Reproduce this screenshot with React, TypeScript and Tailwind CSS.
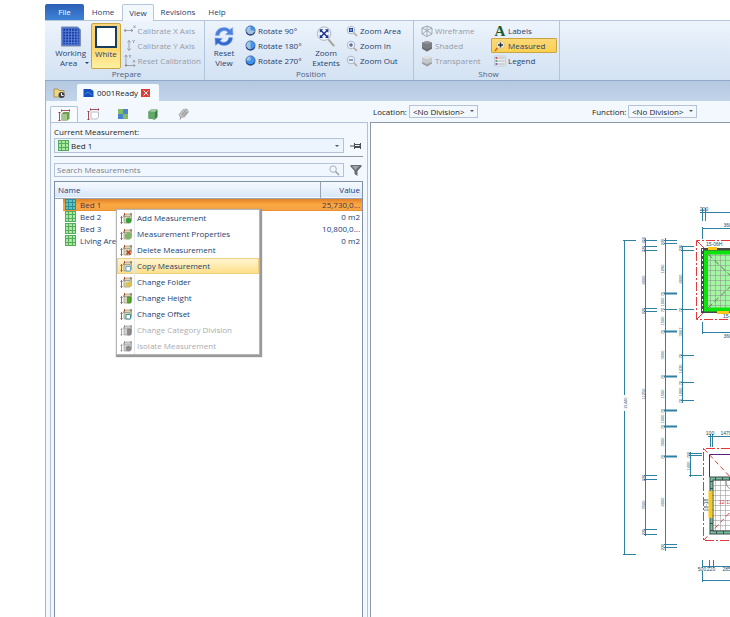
import React from "react";

const calibrations = [
  { label: "Calibrate X Axis", kind: "x" },
  { label: "Calibrate Y Axis", kind: "y" },
  { label: "Reset Calibration", kind: "xy" },
];

const measurements = [
  { name: "Bed 1", value: "25,730,0...", selected: true },
  { name: "Bed 2", value: "0 m2" },
  { name: "Bed 3", value: "10,800,0..." },
  { name: "Living Area", value: "0 m2" },
];

const menuItems = [
  { label: "Add Measurement", badge: "#35a03a", shape: "round" },
  { label: "Measurement Properties", badge: "#7fb56a", shape: "cube" },
  { label: "Delete Measurement", badge: "#c8391c", shape: "cross" },
  { label: "Copy Measurement", badge: "#6aa7c9", shape: "page", active: true },
  { label: "Change Folder", badge: "#e0c04e", shape: "folder" },
  { label: "Change Height", badge: "#58a82e", shape: "height" },
  { label: "Change Offset", badge: "#3f8f96", shape: "page" },
  { label: "Change Category Division", badge: "#8c8c8c", shape: "height", disabled: true },
  { label: "Isolate Measurement", badge: "#8c8c8c", shape: "round", disabled: true },
];

const AxisIcon = ({ kind }: { kind: string }) => (
  <svg viewBox="0 0 12 13" className="h-[13px] w-3 shrink-0" fill="none" stroke="#8b8f96">
    {kind === "x" && <path d="M0 6.500h9M2 5L0 6.500 2 8M7 5l2 1.500L7 8M9.500 1.500l2 2.500M11.500 1.500l-2 2.500" strokeWidth=".8" />}
    {kind === "y" && <path d="M5 1.500v10M3.500 3.500L5 1.500l1.500 2M3.500 9.500L5 11.500l1.500-2M8.500 1l1 1.500L11 1M9.500 2.500V4" strokeWidth=".8" />}
    {kind === "xy" && (
      <>
        <path d="M2 1v10.500h9M.5 3L2 1l1.500 2M9.500 10l1.500 1.500-1.500 1.500M5 1l1 1.500L7 1M6 2.500V4M9 6l2 2.500M11 6L9 8.500" strokeWidth=".8" />
        <path d="M1 11.500h2M2 10.500v2" stroke="#a06a6a" />
      </>
    )}
  </svg>
);

const GridIcon = ({ selected }: { selected?: boolean }) => (
  <svg viewBox="0 0 11 11" className="h-[11px] w-[11px] shrink-0">
    <rect width="11" height="11" fill={selected ? "#2f8f98" : "#57a95c"} />
    {[1, 4, 8].map((x) =>
      [1, 4, 8].map((y) => (
        <rect
          key={`${x}-${y}`}
          x={x}
          y={y}
          width={x === 4 ? 3 : 2}
          height={y === 4 ? 3 : 2}
          fill={selected ? "#5cc4c0" : "#a5eba0"}
        />
      ))
    )}
  </svg>
);

const RotateIcon = ({ turn }: { turn: number }) => (
  <svg viewBox="0 0 12 12" className="h-[11px] w-[11px] shrink-0">
    <circle cx="6" cy="6" r="5" fill="#a9c3dc" />
    {turn === 90 && <path d="M6 6V1a5 5 0 0 1 5 5z" fill="#3f95ee" />}
    {turn === 180 && <path d="M6 11V1a5 5 0 0 1 0 10z" fill="#3f95ee" />}
    {turn === 270 && <path d="M1 6h5V1a5 5 0 1 1-5 5z" fill="#3f95ee" />}
    <circle cx="6" cy="6" r="5" fill="none" stroke="#3c68ae" />
    <path d="M1.500 8a5 5 0 0 0 9 0" fill="none" stroke="#2b4788" strokeWidth="1.200" />
  </svg>
);

const ZoomIcon = ({ kind }: { kind: string }) => (
  <svg viewBox="0 0 12 12" className="h-3 w-3 shrink-0" fill="none">
    <path d="M7.500 7.500l3.500 3.500" stroke="#b2a596" strokeWidth="1.500" />
    <circle cx="5" cy="5" r="3.800" fill="#e8f1fa" stroke="#a5b2c4" strokeWidth=".9" />
    {kind === "area" && <rect x="3.500" y="3.500" width="3" height="3" fill="#7ea0dc" stroke="#2843a0" />}
    {kind === "in" && <path d="M3 5h4M5 3v4" stroke="#334a7c" />}
    {kind === "out" && <path d="M3 5h4" stroke="#334a7c" />}
  </svg>
);

const ModeIcon = ({ kind }: { kind: string }) => {
  if (kind === "wire")
    return (
      <svg viewBox="0 0 12 12" className="h-3 w-3 shrink-0" fill="none" stroke="#9aa0a8" strokeWidth=".9">
        <path d="M1 3l5-2 5 2v6l-5 2.500L1 9zM1 3l5 2.500L11 3M6 1v10.500M1 9l5-3.500L11 9" />
      </svg>
    );
  const dark = kind === "shaded";
  return (
    <svg viewBox="0 0 12 12" className="h-3 w-3 shrink-0">
      <path d="M1 2.500L6 1l5 1.500v6L6 11.500l-5-3z" fill={dark ? "#7b7f84" : "#c6c9cc"} />
      <path d="M1 2.500L6 4l5-1.500L6 1z" fill={dark ? "#94989c" : "#e1e3e5"} />
      <path d="M1 7l5 2 5-2v1.500l-5 3-5-3z" fill={dark ? "#6a6d72" : "#9c9fa3"} />
    </svg>
  );
};

const MenuIcon = ({ badge, shape, disabled }: { badge: string; shape: string; disabled?: boolean }) => (
  <svg viewBox="0 0 12 12" className="h-3 w-3 shrink-0" fill="none">
    <path d="M4 4L6 2h5.500v7l-1.500 2H4z" fill={disabled ? "#cfcfcf" : "#d3d9bd"} stroke={disabled ? "#a2a2a2" : "#a19a80"} strokeWidth=".8" />
    <path d="M4 4.500h6V11M10 4.500l1.500-2" stroke={disabled ? "#b0b0b0" : "#9a8f7a"} strokeWidth=".7" />
    <path d="M1.500 4.500v7M.5 5.500l1-1 1 1M.5 10.500l1 1 1-1" stroke={disabled ? "#9a9a9a" : "#6f5c58"} strokeWidth=".9" />
    <path d="M4.500 1v2M11 1v2M3 4h1.500" stroke={disabled ? "#8e8e8e" : "#b5402c"} />
    {shape === "round" && <circle cx="8.500" cy="8.500" r="2.700" fill={badge} />}
    {shape === "cube" && <path d="M5 6l4-1.500 2.500 1V10L8 11.500 5 10z" fill={badge} />}
    {shape === "cross" && <path d="M6.500 6.500l4 4M10.500 6.500l-4 4" stroke={badge} strokeWidth="1.700" />}
    {shape === "page" && <path d="M6 6.500h4.500v4.500H6z" fill="#fff" stroke={badge} />}
    {shape === "folder" && <path d="M5.500 7h2l1-1h3v4.500h-6z" fill={badge} />}
    {shape === "height" && <path d="M7.500 5h3.500v6H7.500z" fill={badge} stroke={disabled ? "#777" : "#387820"} strokeWidth=".6" />}
  </svg>
);

const SideTabIcon = ({ kind }: { kind: string }) => (
  <svg viewBox="0 0 12 12" className="h-3 w-3" fill="none">
    {(kind === "measure" || kind === "outline") && (
      <>
        <path d="M3.500 1.500h8M1.500 3.500v8" stroke="#9b3c45" strokeWidth=".9" />
        <path d="M3.500.5v2M11.500.5v2M.5 3.500h2M.5 11.500h2" stroke="#9b3c45" />
      </>
    )}
    {kind === "measure" && (
      <>
        <path d="M3.500 5l2-2h6v6.500L9.500 11.500h-6z" fill="#6f9a58" />
        <path d="M3.500 5H9v6.500H3.500z" fill="#9fc889" />
      </>
    )}
    {kind === "outline" && <path d="M4 4h7.500v5L10 11H4z" fill="#fff" stroke="#b9bcc8" />}
    {kind === "tiles" && (
      <>
        <rect x="1" y="1" width="5" height="5" fill="#86bb66" />
        <rect x="6" y="1" width="5" height="5" fill="#4a83d0" />
        <rect x="1" y="6" width="5" height="5" fill="#4a83d0" />
        <rect x="6" y="6" width="5" height="5" fill="#86bb66" />
      </>
    )}
    {kind === "cube" && (
      <>
        <path d="M1.500 3.500L4 1.500h6.500v7.500L8 11.500l-6.500-1z" fill="#3f7d48" />
        <path d="M1.500 3.500L8 4v7.500l-6.500-1z" fill="#64a76a" />
        <path d="M1.500 3.500L4 1.500h6.500L8 4z" fill="#9ccf9c" />
      </>
    )}
    {kind === "clip" && (
      <>
        <path d="M2 6.500L6 1.500l4-.5 1.500 3L7.500 9 3.500 9.500z" fill="#c2c2c4" stroke="#a2a2a5" strokeWidth=".7" />
        <path d="M5 7l3.500-4.500M6.500 8L10 4M4 9l-1 2.500" stroke="#84868b" strokeWidth=".9" />
      </>
    )}
  </svg>
);

const WorkingAreaIcon = () => (
  <svg viewBox="0 0 22 22" className="h-[22px] w-[22px]">
    <path d="M1 1h17l3 3v17H1z" fill="#4c74d2" stroke="#7e8fae" />
    <rect x="3" y="3" width="16" height="16" fill="#173b9e" />
    <path d="M3 5.500h16M3 8.500h16M3 11.500h16M3 14.500h16M3 17.500h16M5.500 3v16M8.500 3v16M11.500 3v16M14.500 3v16M17.500 3v16" stroke="#6a91e8" strokeWidth=".8" />
  </svg>
);

const ResetIcon = () => (
  <svg viewBox="0 0 22 22" className="h-[22px] w-[22px]">
    <path d="M2 10C2 5 6 1.500 11 1.500c2.500 0 4.500.8 6 2.300L20 1.500l.5 8-8-.5 2.500-2.500C12 3.500 6.500 5 6 10z" fill="#4c80dc" stroke="#8aaee8" strokeWidth=".6" />
    <path d="M20 12c0 5-4 8.500-9 8.500-2.500 0-4.500-.8-6-2.300L2 20.500l-.5-8 8 .5L7 15.500c3 3 8.500 1.500 9-3.500z" fill="#3468cf" stroke="#8aaee8" strokeWidth=".6" />
  </svg>
);

const ExtentsIcon = () => (
  <svg viewBox="0 0 22 22" className="h-[22px] w-[22px]" fill="none">
    <path d="M13.500 14l6 7" stroke="#a8a098" strokeWidth="2" />
    <circle cx="9" cy="8" r="7" fill="#f2f7fd" stroke="#a6afbd" />
    <path d="M6 5l6 6M12 5l-6 6" stroke="#1b2f8e" strokeWidth="1.500" />
    <path d="M4.500 3.500h3.500L4.500 7zM13.500 3.500V7L10 3.500zM4.500 12.500V9L8 12.500zM13.500 12.500H10L13.500 9z" fill="#1b2f8e" />
  </svg>
);

const RibbonButton = ({ children, disabled, active }: { children: React.ReactNode; disabled?: boolean; active?: boolean }) => (
  <button
    disabled={disabled}
    className={`flex h-[15px] items-center gap-[2px] whitespace-nowrap rounded-[1px] border px-[2px] ${
      active ? "border-[#c9a545] bg-linear-to-b from-[#fdd977] to-[#fbd04e]" : "border-transparent"
    } ${disabled ? "text-[#959ba5]" : "text-[#24416f]"}`}
  >
    {children}
  </button>
);

const DivisionSelect = ({ id, label }: { id: string; label: string }) => (
  <div className="flex items-center">
    <label htmlFor={id} className="w-9 whitespace-nowrap">
      {label}
    </label>
    <div className="relative">
      <select id={id} className="block h-[13px] w-[69px] appearance-none border border-[#b4c3d8] bg-[#f3f8fe] pl-[3px] leading-[11px]">
        <option>&lt;No Division&gt;</option>
      </select>
      <span className="pointer-events-none absolute right-1 top-[5px] border-x-2 border-t-2 border-x-transparent border-t-[#555]" />
    </div>
  </div>
);

// [x, top, bottom, tick positions]
const chains: [number, number, number, number[]][] = [
  [625, 241, 555, [241, 555]],
  [646, 238, 536, [241, 247, 251, 309, 312, 476, 480, 530, 535]],
  [666, 238, 551, [241, 244, 294, 310, 332, 377, 411, 427, 457, 545, 548]],
  [683, 246, 403, [247, 251, 310, 356, 383, 401]],
  [691, 452, 477, [454, 456, 476]],
];

const heavyTicks = [294, 332, 377, 411, 427, 457];

const chainLabels: [number, number, string][] = [
  [625, 403, "21440"],
  [643, 240, "450"],
  [643, 249, "220"],
  [643, 280, "4000"],
  [643, 311, "220"],
  [643, 394, "11250"],
  [643, 478, "220"],
  [643, 505, "3500"],
  [643, 532, "220"],
  [662, 242, "220"],
  [662, 269, "1290"],
  [662, 294, "70"],
  [662, 302, "1000"],
  [662, 310, "70"],
  [662, 321, "1500"],
  [662, 332, "70"],
  [662, 355, "3000"],
  [662, 377, "70"],
  [662, 394, "1500"],
  [662, 411, "70"],
  [662, 419, "1000"],
  [662, 427, "70"],
  [662, 442, "3000"],
  [662, 457, "70"],
  [662, 502, "4000"],
  [662, 547, "220"],
  [680, 248, "220"],
  [680, 279, "4000"],
  [680, 310, "70"],
  [680, 332, "3067"],
  [680, 356, "70"],
  [680, 369, "1430"],
  [680, 383, "70"],
  [680, 392, "1200"],
  [680, 401, "70"],
  [688, 455, "700"],
  [688, 466, "1400"],
];

const FloorPlan = () => (
  <svg className="h-full w-full" fill="none">
    <defs>
      <pattern id="tiles" width="5" height="5" patternUnits="userSpaceOnUse">
        <path d="M0 .5h5M.5 0v5" stroke="#8a8a8a" strokeWidth=".5" />
      </pattern>
    </defs>
    <g transform="translate(-371 -123)" fontFamily="Liberation Sans, sans-serif">
      <g stroke="#2f80a2">
        {chains.map(([x, top, bottom, ticks]) => (
          <g key={x}>
            <path d={`M${x - 0.5} ${top}V${bottom}`} />
            {ticks.map((y) => (
              <path
                key={y}
                d={`M${x === 625 ? x - 2 : x - 2} ${y - 0.5}H${x + 11}`}
                strokeWidth={x === 666 && heavyTicks.includes(y) ? 2 : 1}
              />
            ))}
          </g>
        ))}
        <path d="M700 212.500h120M702.500 208v13M705.500 208v13M702 228.500h120M702.500 227v12M702 332.500h120M702.500 322v12" />
        <path d="M708 436.500h120M710.500 434v13M712.500 434v13M702 566.500h120M702.500 560v8M709.500 560v8M713.500 560v8M702 580.500h120M702.500 571v11" />
      </g>
      <path d="M624.500 395v16" stroke="#fff" strokeWidth="2" />
      <g fill="#174f70" fontSize="4" textAnchor="middle">
        {chainLabels.map(([x, y, text]) => (
          <text key={`${x}-${y}`} transform={`translate(${x + 2} ${y}) rotate(-90)`}>
            {text}
          </text>
        ))}
        <g fontSize="5">
          <text x="704" y="211">220</text>
          <text x="729" y="227">3600</text>
          <text x="729" y="338">3600</text>
          <text x="710" y="435">100</text>
          <text x="726" y="435">1470</text>
          <text x="702" y="571">500</text>
          <text x="711" y="571">220</text>
          <text x="728" y="571">2850</text>
        </g>
      </g>

      <path d="M820 240.500H696.500V319.500H820" stroke="#e23a3a" strokeDasharray="9 2 2 2" />
      <path d="M697 241l10 10M697 319l8-8" stroke="#e23a3a" />
      <path d="M820 249.500H702.500V311.500H820" fill="#a4f5a4" stroke="#4a4a4a" strokeWidth="3" />
      <path d="M702.500 249v64" stroke="#fff" strokeDasharray="2 3" />
      <path d="M820 252.500H706V309.500H820" stroke="#0be40b" strokeWidth="4" />
      <path d="M708 254h100v54H708z" fill="url(#tiles)" />
      <path d="M708 254l28 27-28 27" stroke="#627d57" strokeDasharray="6 3" />
      <path d="M708 248.500h9M717 312.500h12" stroke="#ffc61a" strokeWidth="3" />
      <text x="706" y="246" fontSize="5" fill="#174f70">15-06H</text>
      <text x="723" y="318" fontSize="5" fill="#174f70">15-06</text>

      <path d="M820 448.500H703.500V540.500H820" stroke="#e23a3a" strokeDasharray="9 2 2 2" />
      <path d="M704 449l30 32M704 540l30-32" stroke="#e23a3a" strokeDasharray="5 3" />
      <path d="M820 454.500H709.500V477" stroke="#582080" />
      <path d="M712 479h100v53H712z" fill="url(#tiles)" />
      <path d="M820 478.500H711.500V532.500H820" stroke="#3c4a48" strokeWidth="4" />
      <path d="M820 478.500H711.500V532.500H820" stroke="#73bfa0" strokeDasharray="6 1" strokeWidth="2" />
      <path d="M710.500 491v27" stroke="#ffc61a" strokeWidth="4" />
      <path d="M726 480c0 6 2 8 6 10" stroke="#888" />
      <text transform="translate(708 505) rotate(-90)" textAnchor="middle" fontSize="5" fill="#174f70">18-18</text>
      <text x="719" y="504" fontSize="5" fill="#e23a3a">12-13</text>
    </g>
  </svg>
);

const Ribbon = () => (
  <section className="flex h-[61px] border-y border-t-[#b5c6da] border-b-[#8fa9c8] bg-linear-to-b from-[#edf4fc] via-[#dfeaf7] to-[#d3e2f3]">
    <div className="flex w-40 flex-col border-r border-[#b3c5da]">
      <div className="flex h-[47px] pl-2 pt-[2px]">
        <button className="relative flex w-9 flex-col items-center pt-[3px] leading-[10px]">
          <WorkingAreaIcon />
          <span className="mt-px">Working</span>
          <span className="pr-1">Area</span>
          <span className="absolute -right-[1px] bottom-1 border-x-2 border-t-2 border-x-transparent border-t-[#24416f]" />
        </button>
        <button className="ml-[3px] flex h-[46px] w-[30px] flex-col items-center rounded-[2px] border border-[#c9a545] bg-linear-to-b from-[#fbd67b] via-[#fdd467] to-[#fff0a0] pt-[2px]">
          <span className="h-[22px] w-[22px] border-2 border-[#173d60] bg-white" />
          <span className="mt-px leading-[10px]">White</span>
        </button>
        <div className="flex flex-col">
          {calibrations.map((item) => (
            <RibbonButton key={item.kind} disabled>
              <AxisIcon kind={item.kind} />
              {item.label}
            </RibbonButton>
          ))}
        </div>
      </div>
      <div className="pl-1 text-center leading-3 text-[#4b6287]">Prepare</div>
    </div>
    <div className="flex w-[209px] flex-col border-r border-[#b3c5da]">
      <div className="flex h-[47px] pl-px pt-[2px]">
        <button className="flex w-9 flex-col items-center pt-[3px] leading-[10px]">
          <ResetIcon />
          <span className="mt-px">Reset</span>
          <span>View</span>
        </button>
        <div className="flex w-[67px] flex-col">
          {[90, 180, 270].map((turn) => (
            <RibbonButton key={turn}>
              <RotateIcon turn={turn} />
              Rotate {turn}°
            </RibbonButton>
          ))}
        </div>
        <button className="flex w-[34px] flex-col items-center pt-[3px] leading-[10px]">
          <ExtentsIcon />
          <span className="mt-px">Zoom</span>
          <span>Extents</span>
        </button>
        <div className="flex flex-col">
          <RibbonButton>
            <ZoomIcon kind="area" />
            Zoom Area
          </RibbonButton>
          <RibbonButton>
            <ZoomIcon kind="in" />
            Zoom In
          </RibbonButton>
          <RibbonButton>
            <ZoomIcon kind="out" />
            Zoom Out
          </RibbonButton>
        </div>
      </div>
      <div className="pl-1 text-center leading-3 text-[#4b6287]">Position</div>
    </div>
    <div className="flex w-[146px] flex-col border-r border-[#b3c5da]">
      <div className="flex h-[47px] pl-1 pt-[2px]">
        <div className="flex w-[73px] flex-col">
          <RibbonButton disabled>
            <ModeIcon kind="wire" />
            Wireframe
          </RibbonButton>
          <RibbonButton disabled>
            <ModeIcon kind="shaded" />
            Shaded
          </RibbonButton>
          <RibbonButton disabled>
            <ModeIcon kind="transparent" />
            Transparent
          </RibbonButton>
        </div>
        <div className="flex w-[66px] flex-col">
          <RibbonButton>
            <span className="w-3 text-center font-['Liberation_Serif',serif] text-[15px] font-bold leading-3 text-[#1d5c26]">A</span>
            Labels
          </RibbonButton>
          <RibbonButton active>
            <svg viewBox="0 0 12 12" className="h-3 w-3" fill="none">
              <circle cx="6.500" cy="5" r="4" fill="#ffefb0" stroke="#c6b98c" strokeWidth=".7" />
              <path d="M6.500 2.500v5M4 5h5" stroke="#243457" strokeWidth="1.500" />
              <path d="M3.500 8L1 11" stroke="#c96a20" strokeWidth="1.500" />
            </svg>
            Measured
          </RibbonButton>
          <RibbonButton>
            <svg viewBox="0 0 12 12" className="h-3 w-3">
              <rect x=".5" y="1" width="11" height="10" fill="#e9edf0" stroke="#b7bcc6" strokeWidth=".6" />
              <path d="M4.500 3h6M4.500 6h6M4.500 9h6" stroke="#a3a8b2" strokeWidth=".8" />
              <path d="M1.500 2h2v2h-2z" fill="#c85462" />
              <path d="M1.500 5h2v2h-2z" fill="#63a56a" />
              <path d="M1.500 8h2v2h-2z" fill="#7b65b5" />
            </svg>
            Legend
          </RibbonButton>
        </div>
      </div>
      <div className="pl-1 text-center leading-3 text-[#4b6287]">Show</div>
    </div>
  </section>
);

const ContextMenu = () => (
  <div role="menu" className="absolute left-[61px] top-[27px] w-36 border border-[#b5b5b5] bg-white text-[#24416f] shadow-[1px_1px_1px_1px_#999]">
    {menuItems.map((item) => (
      <button
        key={item.label}
        role="menuitem"
        disabled={item.disabled}
        className={`flex h-4 w-full items-center border pl-[2px] text-left ${
          item.active ? "border-[#f0d080] bg-linear-to-b from-[#fff5cf] to-[#ffe08a]" : "border-transparent"
        } ${item.disabled ? "text-[#a9abae]" : ""}`}
      >
        <MenuIcon badge={item.badge} shape={item.shape} disabled={item.disabled} />
        <span className="ml-[2px] border-l border-[#e3e6ea] pl-[2px] leading-4">{item.label}</span>
      </button>
    ))}
  </div>
);

const Sidebar = () => (
  <aside className="flex w-[324px] shrink-0 flex-col pl-1 pr-[2px] pt-[5px]">
    <div className="flex">
      {["measure", "outline", "tiles", "cube", "clip"].map((kind, index) => (
        <button
          key={kind}
          aria-label={kind}
          className={`flex h-4 items-center justify-center ${
            index === 0 ? "w-7 rounded-t-[2px] border border-b-0 border-[#b0c1d8] bg-[#f8fbff]" : "w-[30px]"
          }`}
        >
          <SideTabIcon kind={kind} />
        </button>
      ))}
    </div>
    <div className="flex flex-1 flex-col border border-b-0 border-[#b0c1d8] pl-[3px] pr-1 pt-[3px]">
      <label htmlFor="current" className="leading-[11px]">
        Current Measurement:
      </label>
      <div className="mt-px flex items-center">
        <div className="flex h-[15px] flex-1 items-center border border-[#b4c3d8] bg-[#ecf5fe] pl-[3px]">
          <GridIcon />
          <select id="current" className="h-[13px] flex-1 appearance-none pl-[2px] leading-[13px]">
            <option>Bed 1</option>
          </select>
          <span className="pointer-events-none mr-1 border-x-2 border-t-2 border-x-transparent border-t-[#555]" />
        </div>
        <button aria-label="Pin" className="flex w-[19px] justify-center pl-1">
          <svg viewBox="0 0 12 8" className="h-2 w-3" fill="none" stroke="#4b4e54">
            <path d="M0 4h4M4.500 1v6M5 2.500h5v3H5M5 4.500h5M10.500 1v6" />
          </svg>
        </button>
      </div>
      <hr className="mt-[3px] border-[#8f9aa8]" />
      <div className="mt-[6px] flex items-center">
        <div className="flex h-[14px] flex-1 items-center border border-[#b4c3d8] bg-[#f0f7fe] pl-[2px] pr-[3px]">
          <input
            type="text"
            aria-label="Search Measurements"
            placeholder="Search Measurements"
            className="h-3 flex-1 leading-3 outline-none placeholder:text-[#7b818a]"
          />
          <svg viewBox="0 0 12 12" className="h-[11px] w-[11px]" fill="none" stroke="#a3aab4">
            <circle cx="4.500" cy="4.500" r="3.500" />
            <path d="M7 7l4 4" strokeWidth="1.700" />
          </svg>
        </div>
        <button aria-label="Filter" className="flex w-[19px] justify-center pl-1">
          <svg viewBox="0 0 12 11" className="h-[11px] w-3">
            <path d="M.5 0h11v1.500L7.500 6v5l-3-2V6L.5 1.500z" fill="#696c70" />
            <path d="M2 1h7L5.500 5z" fill="#a2a5a8" />
          </svg>
        </button>
      </div>
      <div className="relative mt-1 flex-1 border border-b-0 border-[#7f8fa5] bg-white">
        <table className="w-full table-fixed border-collapse text-[#1d3d77]">
          <colgroup>
            <col className="w-2" />
            <col />
            <col className="w-[42px]" />
          </colgroup>
          <thead>
            <tr className="h-4 border-b border-[#98a4b5] bg-linear-to-b from-[#f6faff] to-[#d9e7f7] leading-[15px]">
              <th colSpan={2} className="p-0 pl-[3px] text-left font-normal">Name</th>
              <th className="border-l border-[#98a4b5] p-0 pr-[2px] text-right font-normal">Value</th>
            </tr>
          </thead>
          <tbody>
            {measurements.map((row) => (
              <tr key={row.name} className="h-3 leading-3">
                <td className="p-0" />
                <td className={`p-0 ${row.selected ? "bg-linear-to-b from-[#e07b20] via-[#fba944] to-[#f5a243] text-[#4a3145]" : ""}`}>
                  <div className="flex h-3 items-center gap-1 pl-[2px]">
                    <GridIcon selected={row.selected} />
                    {row.name}
                  </div>
                </td>
                <td
                  className={`whitespace-nowrap p-0 pr-[2px] text-right ${
                    row.selected ? "bg-linear-to-b from-[#e07b20] via-[#fba944] to-[#f5a243] text-[#4a3145]" : ""
                  }`}
                >
                  {row.value}
                </td>
              </tr>
            ))}
          </tbody>
        </table>
        <ContextMenu />
      </div>
    </div>
  </aside>
);

const App = () => {
  return (
    <div className="flex min-h-screen flex-col bg-white pl-[45px] pt-1 font-['Open_Sans','Noto_Sans',sans-serif] text-[8px] leading-3 text-[#24416f]">
      <nav className="flex h-4 items-stretch">
        <button className="w-[39px] rounded-t-[2px] bg-linear-to-b from-[#2b5fb4] to-[#3f83d8] text-white">File</button>
        <button className="w-[38px]">Home</button>
        <button className="relative -mb-px w-8 rounded-t-[2px] border border-b-0 border-[#b5c6da] bg-[#f3f8fe]">View</button>
        <button className="w-12">Revisions</button>
        <button className="w-[30px]">Help</button>
      </nav>
      <Ribbon />
      <div className="flex h-5 items-end border-l border-[#9db5d3] bg-linear-to-b from-[#b4c8e1] to-[#c2d4ea] pl-1">
        <button aria-label="Open project" className="flex h-[17px] w-[27px] items-center pl-[3px]">
          <svg viewBox="0 0 13 12" className="h-3 w-[13px]">
            <path d="M1 2h4l1 1.500h5V10H1z" fill="#f0d783" stroke="#9d8848" strokeWidth=".8" />
            <circle cx="8.500" cy="8" r="3" fill="#3d414a" />
            <path d="M8.500 6v2.500h2" stroke="#fff" fill="none" />
          </svg>
        </button>
        <div className="flex h-[17px] items-center gap-[3px] rounded-t-[2px] bg-[#f5faff] pl-[6px] pr-[9px] text-[#222]">
          <svg viewBox="0 0 11 10" className="h-[10px] w-[11px]">
            <path d="M.5 1h7L10.500 3v6H.5z" fill="#1551bb" />
            <path d="M2 6l3-2 4 3" stroke="#5187e0" fill="none" />
          </svg>
          <button>0001Ready</button>
          <button aria-label="Close 0001Ready" className="flex h-2 w-[9px] items-center justify-center bg-[#dc3f3a]">
            <svg viewBox="0 0 9 9" className="h-[6px] w-[6px]" stroke="#fff" strokeWidth="1.500">
              <path d="M1 1l7 7M8 1L1 8" />
            </svg>
          </button>
        </div>
      </div>
      <div className="flex flex-1 border-l border-[#9db5d3] bg-[#f3f8fe] text-[#222]">
        <Sidebar />
        <main className="flex min-w-0 flex-1 flex-col">
          <div className="flex h-[21px] items-center gap-[114px] pl-[3px]">
            <DivisionSelect id="location" label="Location:" />
            <DivisionSelect id="function" label="Function:" />
          </div>
          <div className="relative flex-1 overflow-hidden border-l border-t border-[#8f9aa8] bg-white">
            <FloorPlan />
          </div>
        </main>
      </div>
    </div>
  );
};

export default App;
